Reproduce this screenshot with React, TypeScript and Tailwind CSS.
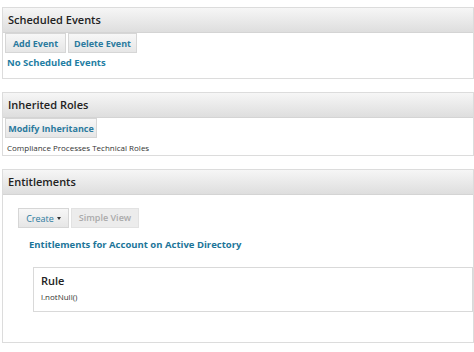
import React from 'react';

const btn =
  'h-[20px] px-0 whitespace-nowrap border border-[#d6d6d6] bg-gradient-to-b from-[#f7f7f7] to-[#e6e6e6] text-[9px] font-bold text-[#2b7a9e] leading-none';

function Panel({ title, children, className = '' }: { title: string; children: React.ReactNode; className?: string }) {
  return (
    <div className={`border border-[#dcdcdc] bg-white ${className}`}>
      <div className="h-[25px] flex items-center px-[5px] bg-gradient-to-b from-[#f6f6f6] to-[#dedede] border-b border-[#d4d4d4]">
        <span className="text-[11px] font-semibold text-[#222]">{title}</span>
      </div>
      {children}
    </div>
  );
}

export default function App() {
  return (
    <div
      className="w-[474px] h-[352px] bg-white pt-[7px] pl-[2px] flex flex-col gap-[13px] overflow-hidden"
      style={{ fontFamily: '"Open Sans", "Liberation Sans", sans-serif' }}
    >
      {/* Scheduled Events */}
      <Panel title="Scheduled Events" className="h-[72px]">
        <div className="flex gap-[2px] px-[2px]">
          <button className={`${btn} w-[61px]`}>Add Event</button>
          <button className={`${btn} w-[69px]`}>Delete Event</button>
        </div>
        <div className="px-[4px] pt-[3px] text-[9.5px] font-bold text-[#1f7ea3]">No Scheduled Events</div>
      </Panel>

      {/* Inherited Roles */}
      <Panel title="Inherited Roles" className="h-[64px]">
        <div className="flex px-[2px]">
          <button className={`${btn} w-[92px]`}>Modify Inheritance</button>
        </div>
        <div className="px-[4px] pt-[4px] text-[8px] text-[#333]">Compliance Processes Technical Roles</div>
      </Panel>

      {/* Entitlements */}
      <Panel title="Entitlements" className="h-[174px] bg-[#fdfdfd]">
        <div className="pl-[15px] pt-[13px] flex gap-[2px]">
          <button className={`${btn} w-[51px] font-normal text-[#2b6f8f] flex items-center justify-center gap-[3px]`}>
            Create
            <span className="w-0 h-0 border-l-[2.5px] border-r-[2.5px] border-t-[3px] border-l-transparent border-r-transparent border-t-[#333]" />
          </button>
          <button className="h-[20px] w-[68px] whitespace-nowrap border border-[#e2e2e2] bg-[#ececec] text-[9px] font-semibold text-[#aaa]">
            Simple View
          </button>
        </div>
        <div className="pl-[26px] pt-[10px] text-[9.5px] font-bold text-[#1c7599]">
          Entitlements for Account on Active Directory
        </div>
        <div className="ml-[30px] mt-[15px] h-[45px] border border-[#d9d9d9] bg-white px-[7px] pt-[5px]">
          <div className="text-[11px] font-semibold text-[#222] leading-[16px]">Rule</div>
          <div className="text-[8px] text-[#333] pt-[2px]">l.notNull()</div>
        </div>
      </Panel>
    </div>
  );
}
